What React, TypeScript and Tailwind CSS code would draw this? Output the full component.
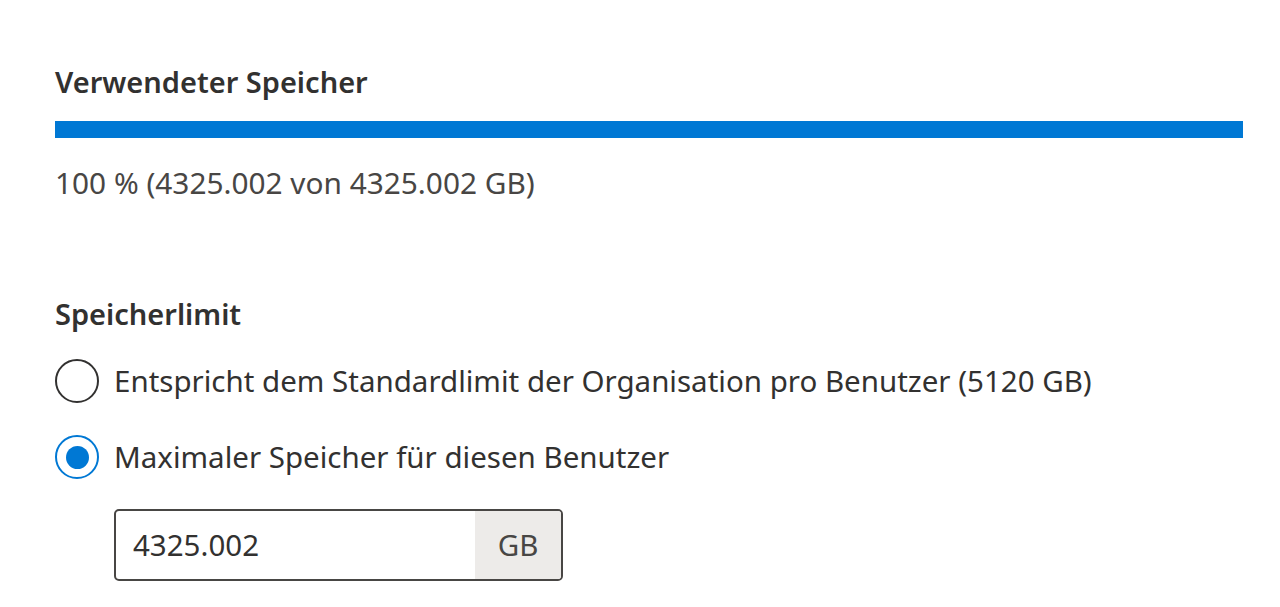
export default function App() {
  return (
    <div
      className="min-h-screen bg-white pl-[55px] pr-[37px] pt-[62px] text-[#323130]"
      style={{ fontFamily: '"Noto Sans", "Open Sans", sans-serif' }}
    >
      {/* Verwendeter Speicher */}
      <h2 className="text-[29px] leading-[40px] font-semibold">
        Verwendeter Speicher
      </h2>
      <div className="mt-[19px] h-[17px] w-full bg-[#e1dfdd]">
        <div className="h-full w-full bg-[#0078d4]" />
      </div>
      <p className="mt-[25px] text-[29.8px] leading-[40px] text-[#484644]">
        100 % (4325.002 von 4325.002 GB)
      </p>

      {/* Speicherlimit */}
      <h2 className="mt-[91px] text-[29px] leading-[40px] font-semibold">
        Speicherlimit
      </h2>
      <div className="mt-[25px] flex flex-col gap-[32px]">
        <label className="flex items-center gap-[15px]">
          <span className="h-[44px] w-[44px] shrink-0 rounded-full border-2 border-[#323130] bg-white" />
          <span className="text-[29.5px] leading-[44px]">
            Entspricht dem Standardlimit der Organisation pro Benutzer (5120 GB)
          </span>
        </label>
        <label className="flex items-center gap-[15px]">
          <span className="flex h-[44px] w-[44px] shrink-0 items-center justify-center rounded-full border-2 border-[#0078d4] bg-white">
            <span className="h-[23px] w-[23px] rounded-full bg-[#0078d4]" />
          </span>
          <span className="text-[29.5px] leading-[44px]">
            Maximaler Speicher für diesen Benutzer
          </span>
        </label>
      </div>

      <div className="ml-[59px] mt-[30px] flex h-[72px] w-[449px] overflow-hidden rounded-[5px] border-2 border-[#484644] bg-white">
        <input
          className="min-w-0 flex-1 bg-transparent pl-[17px] text-[29.5px] text-[#323130] outline-none"
          defaultValue="4325.002"
        />
        <span className="flex w-[86px] items-center justify-center bg-[#edebe9] text-[29.5px] text-[#484644]">
          GB
        </span>
      </div>
    </div>
  );
}
